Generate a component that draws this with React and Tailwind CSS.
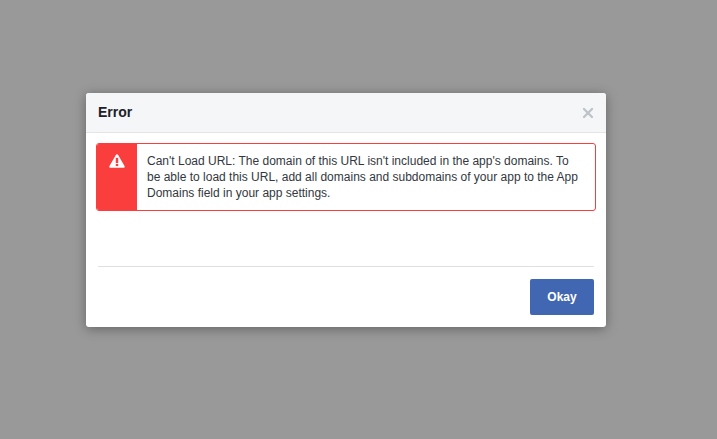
import { X } from 'lucide-react'

function WarningIcon() {
  return (
    <svg width="16" height="14" viewBox="0 0 18 16" className="block">
      <path d="M9 0.4c.6 0 1 .3 1.3.8l7.3 12.6c.6 1 0 2-1.1 2H1.5c-1.1 0-1.7-1-1.1-2L7.7 1.2C8 .7 8.4.4 9 .4z" fill="#fff" />
      <rect x="7.6" y="4.4" width="2.8" height="6" fill="#fa3e3e" />
      <rect x="7.6" y="11.4" width="2.8" height="2.4" fill="#fa3e3e" />
    </svg>
  )
}

export default function App() {
  return (
    <div className="min-h-[439px] bg-[#999999] pl-[86px] pt-[93px] font-['Liberation_Sans',sans-serif]">
      <div className="w-[520px] h-[234px] bg-white rounded-[3px] shadow-[0_2px_12px_rgba(0,0,0,0.35)] flex flex-col">
        <header className="h-10 shrink-0 bg-[#f5f6f7] border-b border-[#e5e5e5] rounded-t-[3px] flex items-center justify-between pl-3 pr-2.5">
          <h1 className="text-[14px] font-bold text-[#1d2129]">Error</h1>
          <X size={16} strokeWidth={3.5} className="text-[#bec2c9]" />
        </header>

        <div className="mx-2.5 mt-2.5 h-[68px] flex border border-[#fa3e3e] rounded-[3px] overflow-hidden">
          <div className="w-10 shrink-0 bg-[#fa3e3e] flex justify-center pt-2.5">
            <WarningIcon />
          </div>
          <p className="pl-2.5 pr-3 pt-[9px] text-[12px] leading-4 text-[#333740]">
            Can't Load URL: The domain of this URL isn't included in the app's domains. To be able to load this URL, add all domains and subdomains of your app to the App Domains field in your app settings.
          </p>
        </div>

        <div className="mx-3 mt-[55px] border-t border-[#dddfe2]" />

        <div className="flex justify-end px-3 mt-3">
          <button className="w-16 h-9 bg-[#4267b2] rounded-[2px] text-[12px] font-bold text-white">Okay</button>
        </div>
      </div>
    </div>
  )
}
